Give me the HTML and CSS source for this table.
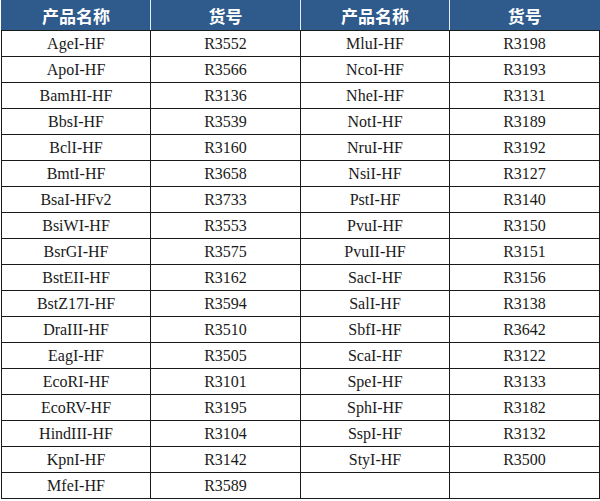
FILE: index.html
```html
<!DOCTYPE html>
<html lang="zh-CN">
<head>
<meta charset="utf-8">
<link rel="stylesheet" href="styles.css">
</head>
<body>
<table class="enzymes">
  <colgroup><col class="c1"><col class="c2"><col class="c3"><col class="c4"></colgroup>
  <thead>
    <tr><th>产品名称</th><th>货号</th><th>产品名称</th><th>货号</th></tr>
  </thead>
  <tbody>
    <tr><td>AgeI-HF</td><td>R3552</td><td>MluI-HF</td><td>R3198</td></tr>
    <tr><td>ApoI-HF</td><td>R3566</td><td>NcoI-HF</td><td>R3193</td></tr>
    <tr><td>BamHI-HF</td><td>R3136</td><td>NheI-HF</td><td>R3131</td></tr>
    <tr><td>BbsI-HF</td><td>R3539</td><td>NotI-HF</td><td>R3189</td></tr>
    <tr><td>BclI-HF</td><td>R3160</td><td>NruI-HF</td><td>R3192</td></tr>
    <tr><td>BmtI-HF</td><td>R3658</td><td>NsiI-HF</td><td>R3127</td></tr>
    <tr><td>BsaI-HFv2</td><td>R3733</td><td>PstI-HF</td><td>R3140</td></tr>
    <tr><td>BsiWI-HF</td><td>R3553</td><td>PvuI-HF</td><td>R3150</td></tr>
    <tr><td>BsrGI-HF</td><td>R3575</td><td>PvuII-HF</td><td>R3151</td></tr>
    <tr><td>BstEII-HF</td><td>R3162</td><td>SacI-HF</td><td>R3156</td></tr>
    <tr><td>BstZ17I-HF</td><td>R3594</td><td>SalI-HF</td><td>R3138</td></tr>
    <tr><td>DraIII-HF</td><td>R3510</td><td>SbfI-HF</td><td>R3642</td></tr>
    <tr><td>EagI-HF</td><td>R3505</td><td>ScaI-HF</td><td>R3122</td></tr>
    <tr><td>EcoRI-HF</td><td>R3101</td><td>SpeI-HF</td><td>R3133</td></tr>
    <tr><td>EcoRV-HF</td><td>R3195</td><td>SphI-HF</td><td>R3182</td></tr>
    <tr><td>HindIII-HF</td><td>R3104</td><td>SspI-HF</td><td>R3132</td></tr>
    <tr><td>KpnI-HF</td><td>R3142</td><td>StyI-HF</td><td>R3500</td></tr>
    <tr><td>MfeI-HF</td><td>R3589</td><td></td><td></td></tr>
  </tbody>
</table>
</body>
</html>
```
FILE: styles.css
```css
html, body {
  margin: 0;
  padding: 0;
  background: #ffffff;
}

.enzymes {
  margin-left: 1px;
  width: 598px;
  border-collapse: collapse;
  table-layout: fixed;
  font-family: "Liberation Serif", "Times New Roman", serif;
  font-size: 16px;
  color: #1a1a1a;
}

.c1 { width: 149px; }
.c2 { width: 150px; }
.c3 { width: 149px; }
.c4 { width: 150px; }

.enzymes th {
  height: 30px;
  padding: 0;
  background: #2f5a8c;
  color: #ffffff;
  font-family: "Noto Sans CJK SC", sans-serif;
  font-weight: 700;
  font-size: 17px;
  line-height: 1;
  text-align: center;
  vertical-align: middle;
  border-left: 1px solid #e6edf5;
  border-bottom: 1px solid #1a1a1a;
}

.enzymes th:first-child {
  border-left: 1px solid #2f5a8c;
}

.enzymes td {
  height: 25px;
  padding: 0;
  text-align: center;
  vertical-align: middle;
  line-height: 1;
  border: 1px solid #1a1a1a;
}
```
